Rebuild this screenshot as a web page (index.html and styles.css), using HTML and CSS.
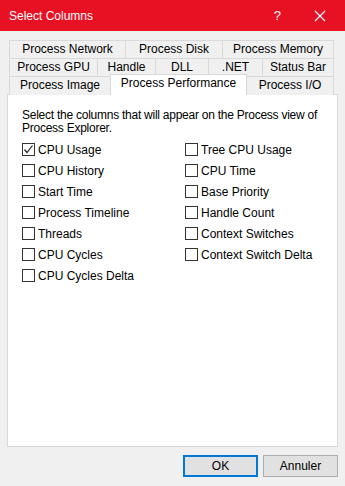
FILE: index.html
```html
<!DOCTYPE html>
<html>
<head>
<meta charset="utf-8">
<link rel="stylesheet" href="styles.css">
</head>
<body>
<div class="window">
  <div class="titlebar">
    <span class="title">Select Columns</span>
    <span class="help">?</span>
    <svg class="close" width="12" height="12" viewBox="0 0 12 12"><path d="M1 1L11 11M11 1L1 11" stroke="#fff" stroke-width="1.2" fill="none"/></svg>
  </div>
  <div class="content">
    <div class="tabs">
      <div class="tabrow">
        <div class="tab w116">Process Network</div>
        <div class="tab w97">Process Disk</div>
        <div class="tab w112 last">Process Memory</div>
      </div>
      <div class="tabrow">
        <div class="tab w88">Process GPU</div>
        <div class="tab w58">Handle</div>
        <div class="tab w53">DLL</div>
        <div class="tab w54">.NET</div>
        <div class="tab w72 last">Status Bar</div>
      </div>
      <div class="tabrow">
        <div class="tab w101">Process Image</div>
        <div class="tab w137 selected">Process Performance</div>
        <div class="tab w87 last">Process I/O</div>
      </div>
    </div>
    <div class="panel">
      <p class="desc">Select the columns that will appear on the Process view of<br>Process Explorer.</p>
      <div class="cols">
        <div class="col">
          <label class="opt"><span class="box checked"><svg width="11" height="11" viewBox="0 0 11 11"><path d="M1.5 5.5L4 8.5L9.5 1.5" stroke="#222" stroke-width="1.2" fill="none"/></svg></span>CPU Usage</label>
          <label class="opt"><span class="box"></span>CPU History</label>
          <label class="opt"><span class="box"></span>Start Time</label>
          <label class="opt"><span class="box"></span>Process Timeline</label>
          <label class="opt"><span class="box"></span>Threads</label>
          <label class="opt"><span class="box"></span>CPU Cycles</label>
          <label class="opt"><span class="box"></span>CPU Cycles Delta</label>
        </div>
        <div class="col">
          <label class="opt"><span class="box"></span>Tree CPU Usage</label>
          <label class="opt"><span class="box"></span>CPU Time</label>
          <label class="opt"><span class="box"></span>Base Priority</label>
          <label class="opt"><span class="box"></span>Handle Count</label>
          <label class="opt"><span class="box"></span>Context Switches</label>
          <label class="opt"><span class="box"></span>Context Switch Delta</label>
        </div>
      </div>
    </div>
    <div class="buttons">
      <button class="btn default">OK</button>
      <button class="btn">Annuler</button>
    </div>
  </div>
</div>
</body>
</html>
```

FILE: styles.css
```css
* { box-sizing: border-box; }
html, body { margin: 0; padding: 0; }
body {
  width: 345px;
  height: 486px;
  overflow: hidden;
  font-family: "Liberation Sans", Arial, sans-serif;
  font-size: 12px;
  color: #000;
  background: #f0f0f0;
}
.window {
  display: flex;
  flex-direction: column;
  height: 486px;
}
.titlebar {
  height: 31px;
  background: #e81123;
  color: #fff;
  display: flex;
  align-items: center;
  padding-left: 9px;
  flex: none;
}
.title { flex: 1; font-size: 12px; }
.help { font-size: 13px; margin-right: 33px; }
.close { margin-right: 19px; }
.content {
  flex: 1;
  display: flex;
  flex-direction: column;
  padding: 9px 7px 0 7px;
}
.tabs {
  display: flex;
  flex-direction: column;
  padding-left: 2px;
  position: relative;
  z-index: 1;
}
.tabrow {
  display: flex;
  height: 18px;
}
.tab {
  height: 19px;
  border: 1px solid #d9d9d9;
  border-right: none;
  border-bottom: none;
  background: #f0f0f0;
  text-align: center;
  line-height: 17px;
  white-space: nowrap;
  flex: none;
}
.tab.last { border-right: 1px solid #d9d9d9; }
.tab.selected {
  background: #fff;
  height: 21px;
  margin-top: -2px;
  border-right: 1px solid #d9d9d9;
  line-height: 17px;
}
.tab.selected + .tab { border-left: none; }
.w116 { width: 116px; }
.w97 { width: 97px; }
.w112 { width: 112px; }
.w88 { width: 88px; }
.w58 { width: 58px; }
.w53 { width: 53px; }
.w54 { width: 54px; }
.w72 { width: 72px; }
.w101 { width: 101px; }
.w137 { width: 137px; }
.w87 { width: 87px; }
.panel {
  height: 353px;
  background: #fff;
  border: 1px solid #d9d9d9;
  padding: 14px 0 0 14px;
  overflow: hidden;
}
.desc {
  margin: 0;
  line-height: 13px;
  letter-spacing: -0.25px;
  white-space: nowrap;
}
.cols {
  display: flex;
  margin-top: 4px;
}
.col {
  display: flex;
  flex-direction: column;
  width: 163px;
  flex: none;
}
.opt {
  display: flex;
  align-items: center;
  height: 21px;
  white-space: nowrap;
}
.box {
  width: 13px;
  height: 13px;
  border: 1px solid #333;
  background: #fff;
  margin-right: 3px;
  flex: none;
  display: flex;
  align-items: center;
  justify-content: center;
}
.buttons {
  display: flex;
  justify-content: flex-end;
  gap: 5px;
  margin-top: 8px;
}
.btn {
  width: 75px;
  height: 22px;
  background: #e1e1e1;
  border: 1px solid #adadad;
  font-family: "Liberation Sans", Arial, sans-serif;
  font-size: 12px;
  color: #000;
  padding: 0;
  margin: 0;
}
.btn.default {
  border: 2px solid #0078d7;
}
```
